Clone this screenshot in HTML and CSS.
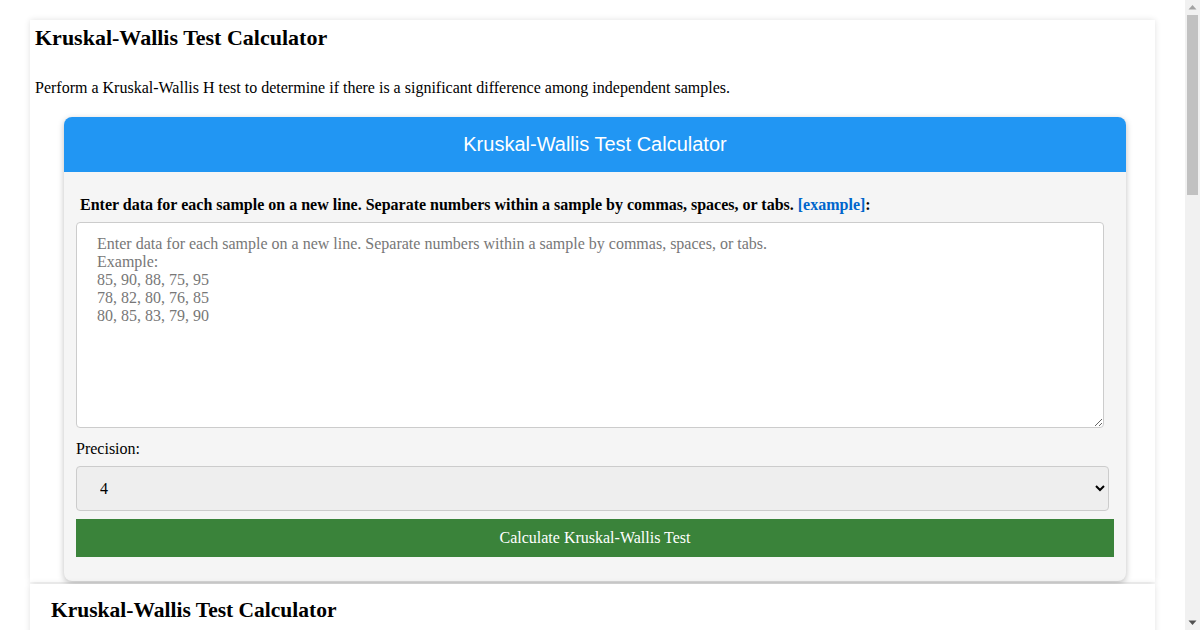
FILE: index.html
```html
<!DOCTYPE html>
<html lang="en">
<head>
<meta charset="utf-8">
<title>Kruskal-Wallis Test Calculator</title>
<link rel="stylesheet" href="styles.css">
</head>
<body>
<div class="page">
  <h2 class="page-title">Kruskal-Wallis Test Calculator</h2>
  <p class="intro">Perform a Kruskal-Wallis H test to determine if there is a significant difference among independent samples.</p>
  <div class="card">
    <div class="card-header">Kruskal-Wallis Test Calculator</div>
    <div class="card-body">
      <label class="data-label" for="data">Enter data for each sample on a new line. Separate numbers within a sample by commas, spaces, or tabs. <a class="example-link" href="#">[example]</a>:</label>
      <textarea id="data" class="data-input" placeholder="Enter data for each sample on a new line. Separate numbers within a sample by commas, spaces, or tabs.
Example:
85, 90, 88, 75, 95
78, 82, 80, 76, 85
80, 85, 83, 79, 90"></textarea>
      <label class="precision-label" for="precision">Precision:</label>
      <select id="precision" class="precision-select">
        <option>2</option>
        <option>3</option>
        <option selected>4</option>
        <option>5</option>
        <option>6</option>
      </select>
      <button class="calc-button" type="button">Calculate Kruskal-Wallis Test</button>
    </div>
  </div>
</div>
<div class="page info">
  <h2 class="info-title">Kruskal-Wallis Test Calculator</h2>
  <p>The Kruskal-Wallis H test is a rank-based nonparametric test that can be used to determine if there are statistically significant differences between two or more groups of an independent variable on a continuous or ordinal dependent variable.</p>
  <h3>How to use</h3>
  <p>Enter the data of each sample on its own line. Values within a sample can be separated by commas, spaces, or tabs. Choose the precision and press the calculate button.</p>
  <h3>Assumptions</h3>
  <p>The observations are independent, the dependent variable is at least ordinal, and the distributions of each group have a similar shape.</p>
  <h3>Formula</h3>
  <p>H = (12 / (N(N+1))) &Sigma; (R<sub>i</sub>&sup2; / n<sub>i</sub>) &minus; 3(N+1)</p>
  <p>where N is the total number of observations, n<sub>i</sub> is the number of observations in group i and R<sub>i</sub> is the sum of ranks in group i.</p>
  <h3>Interpretation</h3>
  <p>If the p-value is less than the chosen significance level, reject the null hypothesis that all samples come from the same distribution.</p>
  <div class="spacer"></div>
</div>
<div class="scrollbar" aria-hidden="true">
  <svg class="scroll-arrow" width="15" height="15" viewBox="0 0 15 15"><polygon points="3.5,9.5 11.5,9.5 7.5,5" fill="#a3a3a3"/></svg>
  <div class="scroll-track"><div class="scroll-thumb"></div></div>
  <svg class="scroll-arrow" width="15" height="15" viewBox="0 0 15 15"><polygon points="3.5,5.5 11.5,5.5 7.5,10" fill="#505050"/></svg>
</div>
</body>
</html>
```
FILE: styles.css
```css
html, body {
  margin: 0;
  padding: 0;
}
body {
  font-family: "Liberation Serif", "Times New Roman", serif;
  font-size: 16px;
  color: #000;
  background: #fff;
  padding-right: 15px;
}
.page {
  width: 1115px;
  margin: 20px auto 0;
  padding: 0 5px 1px;
  background: #fff;
  box-shadow: 0 0 6px rgba(0, 0, 0, 0.12);
}
.page-title {
  font-size: 22px;
  line-height: 27px;
  margin: 0;
  padding-top: 4px;
}
.intro {
  margin: 28px 0 20px;
}
.card {
  width: 1062px;
  margin-left: 29px;
  background: #f5f5f5;
  border-radius: 8px;
  box-shadow: 0 2px 6px rgba(0, 0, 0, 0.25);
  overflow: hidden;
}
.card-header {
  background: #2196f3;
  color: #fff;
  font-family: "Liberation Sans", Arial, sans-serif;
  font-size: 20px;
  height: 55px;
  line-height: 55px;
  text-align: center;
}
.card-body {
  padding: 24px 12px 24px;
}
.data-label {
  display: block;
  font-weight: bold;
  padding-left: 4px;
  line-height: 18px;
  margin-bottom: 8px;
}
.example-link {
  color: #0066cc;
  text-decoration: none;
}
.data-input {
  display: block;
  box-sizing: border-box;
  width: 1028px;
  height: 206px;
  padding: 12px 20px;
  border: 1px solid #ccc;
  border-radius: 4px;
  background: #fff;
  font-family: "Liberation Serif", "Times New Roman", serif;
  font-size: 16px;
  line-height: 18px;
  margin: 0;
}
.data-input::placeholder {
  color: #777;
}
.precision-label {
  display: block;
  line-height: 18px;
  margin: 12px 0 8px;
}
.precision-select {
  display: block;
  box-sizing: border-box;
  width: 1033px;
  height: 45px;
  padding: 0 19px;
  border: 1px solid #ccc;
  border-radius: 4px;
  background: #eee;
  font-family: "Liberation Serif", "Times New Roman", serif;
  font-size: 16px;
  color: #000;
  margin: 0;
}
.calc-button {
  display: block;
  width: 1038px;
  height: 38px;
  margin-top: 8px;
  border: none;
  background: #3a833a;
  color: #fff;
  font-family: "Liberation Serif", "Times New Roman", serif;
  font-size: 16px;
  cursor: pointer;
}
.info {
  margin-top: 2px;
  padding: 14px 20px 20px 21px;
  width: 1084px;
}
.info-title {
  font-size: 21.5px;
  margin: 0 0 16px;
}
.info h3 {
  font-size: 18px;
  margin: 24px 0 10px;
}
.info p {
  margin: 0 0 14px;
  line-height: 24px;
}
.spacer {
  height: 1000px;
}
.scrollbar {
  position: fixed;
  top: 0;
  right: 0;
  width: 15px;
  height: 100vh;
  background: #f1f1f1;
  display: flex;
  flex-direction: column;
}
.scroll-arrow {
  display: block;
  flex: none;
}
.scroll-track {
  flex: 1;
  padding: 0 2px;
}
.scroll-thumb {
  height: 180px;
  background: #c1c1c1;
}
```
